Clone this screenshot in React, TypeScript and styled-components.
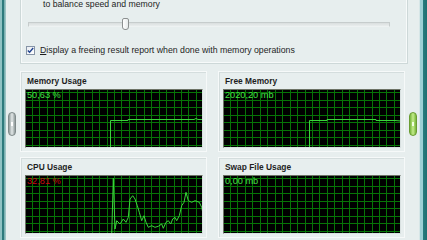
import React from "react";
import styled, { createGlobalStyle } from "styled-components";

const GlobalStyle = createGlobalStyle`
  html, body { margin: 0; padding: 0; }
  body {
    background: #e7eeee;
    font-family: "Liberation Sans", Arial, sans-serif;
    color: #1b1b1b;
  }
`;

const Frame = styled.div`
  width: 427px;
  height: 240px;
  overflow: hidden;
  display: flex;
  background: #e7eeee;
`;

const LeftEdge = styled.div`
  flex: none;
  width: 6px;
  background: linear-gradient(
    to right,
    #8fc2c3 0px, #8fc2c3 2px,
    #2d7a7c 2px, #2d7a7c 4px,
    #6ea8a9 4px, #a9cccc 6px
  );
`;

const RightEdge = styled.div`
  flex: none;
  width: 8px;
  background: linear-gradient(
    to right,
    #d6e6e7 0px, #d6e6e7 1px,
    #9dd0d5 1px, #9dd0d5 4px,
    #2a7c7e 4px, #1f6f71 8px
  );
`;

const Gutter = styled.div<{ $w: number; $pl: number }>`
  flex: none;
  width: ${(p) => p.$w}px;
  padding-left: ${(p) => p.$pl}px;
  padding-top: 112px;
  box-sizing: border-box;
  display: flex;
  flex-direction: column;
  align-items: flex-start;
`;

const Pill = styled.div<{ $green?: boolean }>`
  position: relative;
  width: 8px;
  height: 24px;
  border-radius: 4px;
  box-sizing: border-box;
  border: 1px solid ${(p) => (p.$green ? "#6a9d33" : "#7f8a8a")};
  background: ${(p) =>
    p.$green
      ? "linear-gradient(to right, #78b53a, #c4ec8c 50%, #78b53a)"
      : "linear-gradient(to right, #909a9a, #e2e8e8 50%, #909a9a)"};
  &::after {
    content: "";
    position: absolute;
    left: 2px;
    top: 9px;
    width: 2px;
    height: 4px;
    background: ${(p) => (p.$green ? "#f2ffe0" : "#ffffff")};
  }
`;

const Center = styled.div`
  flex: none;
  width: 388px;
  display: flex;
  flex-direction: column;
`;

const Group = styled.div`
  margin-top: -1px;
  border: 1px solid #cdd8d8;
  border-top: none;
  box-shadow: inset 1px 0 0 #f7fafa, inset -1px -1px 0 #f7fafa;
  padding: 0 0 8px 0;
  display: flex;
  flex-direction: column;
`;

const Hint = styled.div`
  padding-left: 22px;
  font-size: 8.7px;
  line-height: 11px;
  color: #1e1e1e;
  white-space: nowrap;
`;

const SliderRow = styled.div`
  position: relative;
  margin: 8px 0 0 7px;
  width: 362px;
  height: 13px;
  display: flex;
  align-items: center;
`;

const Track = styled.div`
  width: 100%;
  height: 5px;
  box-sizing: border-box;
  border: 1px solid #c6cccc;
  border-bottom-color: #eef2f2;
  background: linear-gradient(#d9dede, #e9eded);
`;

const Thumb = styled.div<{ $left: number }>`
  position: absolute;
  left: ${(p) => p.$left}px;
  top: 0;
  width: 7px;
  height: 12px;
  box-sizing: border-box;
  border: 1px solid #8c9090;
  border-radius: 2px 2px 3px 3px;
  background: linear-gradient(to right, #ffffff, #e6eaea);
`;

const CheckRow = styled.label`
  margin: 14px 0 0 5px;
  display: flex;
  align-items: center;
  gap: 5px;
  font-size: 8.75px;
  line-height: 10px;
  color: #1e1e1e;
  white-space: nowrap;
`;

const Box = styled.span`
  flex: none;
  width: 9px;
  height: 9px;
  box-sizing: border-box;
  border: 1px solid #8694a6;
  background: linear-gradient(135deg, #e8ecf2, #ffffff);
  display: flex;
  align-items: center;
  justify-content: center;
`;

const Panels = styled.div`
  margin-top: 7px;
  display: grid;
  grid-template-columns: 187px 187px;
  column-gap: 11px;
  row-gap: 5px;
`;

const Panel = styled.div`
  border: 1px solid #f6f9f9;
  box-shadow: inset 1px 1px 0 #d4dddd;
  padding: 4px 3px 3px 4px;
  display: flex;
  flex-direction: column;
`;

const Title = styled.div`
  padding-left: 2px;
  font-size: 8.4px;
  font-weight: bold;
  line-height: 10px;
  color: #1e1e1e;
  margin-bottom: 3px;
`;

const Graph = styled.div`
  position: relative;
  width: 178px;
  height: 59px;
  box-sizing: border-box;
  background: #000;
  border: 1px solid #d9e1e1;
  border-top-color: #6d7366;
  border-left-color: #6d7366;
  svg { display: block; }
`;

const Value = styled.span<{ $red?: boolean }>`
  position: absolute;
  left: 1px;
  top: 0px;
  font-size: 9.2px;
  line-height: 10px;
  color: ${(p) => (p.$red ? "#c80c0c" : "#44e444")};
`;

const W = 176;
const H = 57;

function Grid() {
  const v: number[] = [];
  for (let x = 6; x < W; x += 7.45) v.push(Math.round(x) + 0.5);
  const h: number[] = [];
  for (let y = 2; y < H; y += 7.5) h.push(Math.round(y) + 0.5);
  return (
    <g stroke="#077407" strokeWidth={1} shapeRendering="crispEdges">
      {v.map((x) => (
        <line key={"v" + x} x1={x} y1={0} x2={x} y2={H} />
      ))}
      {h.map((y) => (
        <line key={"h" + y} x1={0} y1={y} x2={W} y2={y} />
      ))}
    </g>
  );
}

type Pt = [number, number];

function Chart({ ox, oy, pts, value, red }: { ox: number; oy: number; pts: Pt[]; value: string; red?: boolean }) {
  const d = pts.length
    ? "M" + pts.map(([x, y]) => `${(x - ox).toFixed(1)} ${(y - oy).toFixed(1)}`).join(" L")
    : "";
  return (
    <Graph>
      <svg width={W} height={H} viewBox={`0 0 ${W} ${H}`}>
        <Grid />
        {d && <path d={d} fill="none" stroke="#3bd43b" strokeWidth={1} />}
      </svg>
      <Value $red={red}>{value}</Value>
    </Graph>
  );
}

const memPts: Pt[] = [
  [110.5, 150], [110.5, 119.5], [128, 119.5], [128, 118.5], [194, 118.5], [196, 117.5], [198, 118.5], [203, 118.5],
];
const freePts: Pt[] = [
  [308.5, 150], [308.5, 119.5], [326, 119.5], [326, 118.5], [375, 118.5], [375, 119.5], [394, 119.5], [400, 120],
];
const cpuPts: Pt[] = [
  [111.7, 236], [113.3, 179.3], [115, 230], [116.7, 221.7], [120, 225], [123.3, 220], [126, 223.3], [128.3, 218.3],
  [130, 200], [132.7, 196.7], [135, 200], [137.3, 206.7], [139.3, 213.3], [141.7, 221.7], [144, 216.7], [146, 223.3],
  [148.3, 228.3], [151.7, 226.7], [155, 228.3], [158.3, 227.3], [161.7, 225], [163.3, 229.3], [166, 223.3],
  [168.3, 221.7], [170.7, 225], [172.7, 220], [175, 218.3], [176.7, 221.7], [179.3, 216.7], [181.7, 206.7],
  [184, 203.3], [186, 193.3], [188.3, 201.7], [191.7, 203.3], [195, 201.7], [199.3, 203.3], [201.7, 208.3], [202.7, 213.3],
];

function Check() {
  return (
    <svg width="7" height="7" viewBox="0 0 7 7">
      <path d="M0.8 3.4 L2.6 5.3 L6.2 1" fill="none" stroke="#21438f" strokeWidth={1.4} />
    </svg>
  );
}

export default function App() {
  return (
    <>
      <GlobalStyle />
      <Frame>
        <LeftEdge />
        <Gutter $w={14} $pl={2}>
          <Pill />
        </Gutter>
        <Center>
          <Group>
            <Hint>to balance speed and memory</Hint>
            <SliderRow>
              <Track />
              <Thumb $left={94} />
            </SliderRow>
            <CheckRow>
              <Box>
                <Check />
              </Box>
              <span>
                <u>D</u>isplay a freeing result report when done with memory operations
              </span>
            </CheckRow>
          </Group>
          <Panels>
            <Panel>
              <Title>Memory Usage</Title>
              <Chart ox={26} oy={89} pts={memPts} value="50,63 %" />
            </Panel>
            <Panel>
              <Title>Free Memory</Title>
              <Chart ox={223} oy={89} pts={freePts} value="2020,20 mb" />
            </Panel>
            <Panel>
              <Title>CPU Usage</Title>
              <Chart ox={26} oy={177} pts={cpuPts} value="32,81 %" red />
            </Panel>
            <Panel>
              <Title>Swap File Usage</Title>
              <Chart ox={223} oy={177} pts={[]} value="0,00 mb" />
            </Panel>
          </Panels>
        </Center>
        <Gutter $w={11} $pl={1}>
          <Pill $green />
        </Gutter>
        <RightEdge />
      </Frame>
    </>
  );
}
